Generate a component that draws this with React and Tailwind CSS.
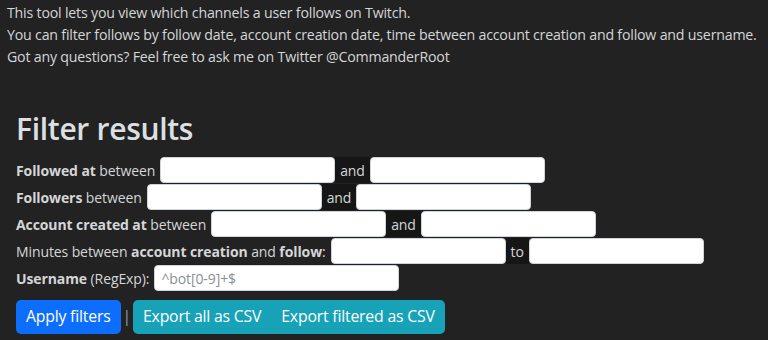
import React from "react";

function Field({ w = "w-[175px]", placeholder }) {
  return (
    <input
      type="text"
      placeholder={placeholder}
      className={`${w} h-[26px] rounded-[4px] bg-white border border-[#ced4da] px-[6px] text-[14px] text-[#212529] placeholder:text-[#8a8f94] outline-none`}
    />
  );
}

function Sep({ children }) {
  return (
    <span className="h-[26px] flex items-center px-[5px] bg-[#161616]">{children}</span>
  );
}

function Label({ children }) {
  return <span className="mr-[5px]">{children}</span>;
}

export default function App() {
  return (
    <div
      className="w-[768px] h-[340px] overflow-hidden bg-[#222222] text-[#d4d6d8]"
      style={{ fontFamily: '"Open Sans", "Noto Sans", sans-serif' }}
    >
      <div className="px-[7px] pt-[2px] text-[14.2px] leading-[22px] tracking-[-0.2px]">
        <p>This tool lets you view which channels a user follows on Twitch.</p>
        <p className="whitespace-nowrap">You can filter follows by follow date, account creation date, time between account creation and follow and username.</p>
        <p>Got any questions? Feel free to ask me on Twitter @CommanderRoot</p>
      </div>

      <div className="px-[16px] pt-[42px]">
        <h2 className="text-[30px] leading-[38px] font-semibold text-[#dde0e3] tracking-[-0.3px]">Filter results</h2>
        <div className="mt-[9px] flex flex-col gap-[1px] text-[14px] tracking-[-0.1px]">
          <div className="flex items-center h-[26px]">
            <Label><b>Followed at</b> between</Label>
            <Field />
            <Sep>and</Sep>
            <Field />
          </div>
          <div className="flex items-center h-[26px]">
            <Label><b>Followers</b> between</Label>
            <Field />
            <Sep>and</Sep>
            <Field />
          </div>
          <div className="flex items-center h-[26px]">
            <Label><b>Account created at</b> between</Label>
            <Field />
            <Sep>and</Sep>
            <Field />
          </div>
          <div className="flex items-center h-[26px]">
            <Label>Minutes between <b>account creation</b> and <b>follow</b>:</Label>
            <Field />
            <Sep>to</Sep>
            <Field />
          </div>
          <div className="flex items-center h-[26px]">
            <Label><b>Username</b> (RegExp):</Label>
            <Field w="w-[245px]" placeholder="^bot[0-9]+$" />
          </div>
        </div>
        <div className="mt-[9px] flex items-center text-[15.8px] tracking-[-0.2px]">
          <button className="h-[34px] px-[10px] rounded-[5px] bg-[#0d6efd] text-white">Apply filters</button>
          <span className="mx-[2px] text-[#9a9ea2]">|</span>
          <div className="flex h-[34px] rounded-[5px] bg-[#17a2b8] overflow-hidden">
            <button className="px-[10px] text-white">Export all as CSV</button>
            <button className="px-[10px] text-white">Export filtered as CSV</button>
          </div>
        </div>
      </div>
    </div>
  );
}
